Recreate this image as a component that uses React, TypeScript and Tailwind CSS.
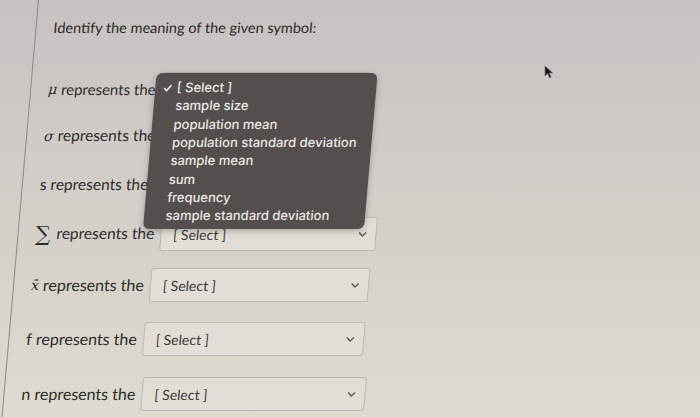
import React from "react";

const menuItems = [
  "sample size",
  "population mean",
  "population standard deviation",
  "sample mean",
  "sum",
  "frequency",
  "sample standard deviation",
];

function Chevron() {
  return (
    <svg width="10" height="7" viewBox="0 0 10 7" className="shrink-0">
      <polyline points="1.5,1.5 5,5 8.5,1.5" fill="none" stroke="#5a5653" strokeWidth="1.4" />
    </svg>
  );
}

function SelectBox({ width, children }: { width: string; children?: React.ReactNode }) {
  return (
    <div className={`relative ml-[6px] flex h-full items-center justify-between rounded-[3px] border border-[#bdb8b1] bg-[#e2ded7] pl-[12px] pr-[8px] ${width}`}>
      <span className="text-[14px] text-[#3a3836]">[ Select ]</span>
      <Chevron />
      {children}
    </div>
  );
}

function OpenMenu() {
  return (
    <div className="absolute left-[-8px] top-0 z-10 h-[156px] w-[221px] rounded-[6px] bg-[#544f4c] pt-[6px] font-['Inter',sans-serif] text-[13px] font-medium text-[#ebe8e5] shadow-[0_2px_6px_rgba(0,0,0,0.25)]">
      <div className="flex h-[18px] items-center">
        <svg width="22" height="10" viewBox="0 0 22 10" className="shrink-0">
          <polyline points="9,5 11.5,7.8 16,2" fill="none" stroke="#ebe8e5" strokeWidth="1.6" />
        </svg>
        <span>[ Select ]</span>
      </div>
      {menuItems.map((item) => (
        <div key={item} className="flex h-[18.3px] items-center pl-[22px]">
          {item}
        </div>
      ))}
    </div>
  );
}

function Row({
  symbol,
  mt,
  width,
  size,
  open,
}: {
  symbol: React.ReactNode;
  mt: string;
  width: string;
  size: string;
  open?: boolean;
}) {
  return (
    <div className={`flex h-[34px] items-center ${mt}`}>
      <div className={`flex items-center whitespace-nowrap text-[#2e2c2b] ${size}`}>
        {symbol}
        <span>&nbsp;represents the</span>
      </div>
      <SelectBox width={width}>{open && <OpenMenu />}</SelectBox>
    </div>
  );
}

const serifItalic = "font-['DejaVu_Serif',serif] italic";

export default function App() {
  return (
    <div className="relative h-[417px] w-[700px] overflow-hidden bg-gradient-to-b from-[#c7c2c0] via-[#d3cfc9] to-[#dfdbd0] font-['Lato',sans-serif]">
      <div className="h-[460px] origin-top-left -skew-x-[5deg]">
        <div className="ml-[38px] h-full border-l border-[#8c8885] pl-[17px] pt-[18px]">
          <h1 className="text-[14.5px] leading-5 text-[#2b2928]">Identify the meaning of the given symbol:</h1>

          <Row mt="mt-[34px]" size="text-[15px]" width="w-[206px]" open symbol={<span className={`${serifItalic} text-[14px]`}>μ</span>} />
          <Row mt="mt-[13px]" size="text-[15.5px]" width="w-[206px]" symbol={<span className={`${serifItalic} text-[14px]`}>σ</span>} />
          <Row mt="mt-[15px]" size="text-[15.5px]" width="w-[206px]" symbol={<span>s</span>} />
          <Row mt="mt-[15px]" size="text-[15.5px]" width="w-[216px]" symbol={<span className="pr-[2px] font-['DejaVu_Serif',serif] text-[21px] leading-none">∑</span>} />
          <Row mt="mt-[17px]" size="text-[16px]" width="w-[219px]" symbol={<span className={`${serifItalic} text-[14px]`}>x̄</span>} />
          <Row mt="mt-[20px]" size="text-[16px]" width="w-[221px]" symbol={<span>f</span>} />
          <Row mt="mt-[21px]" size="text-[16px]" width="w-[224px]" symbol={<span>n</span>} />
        </div>
      </div>

      {/* mouse pointer */}
      <svg className="absolute left-[544px] top-[65px]" width="11" height="14" viewBox="0 0 11 14">
        <path d="M1 1 L1 11 L3.6 8.6 L5.6 12.8 L7.2 12 L5.3 8 L8.8 8 Z" fill="#1c1b1b" stroke="#6e6a68" strokeWidth="0.6" />
      </svg>
    </div>
  );
}
